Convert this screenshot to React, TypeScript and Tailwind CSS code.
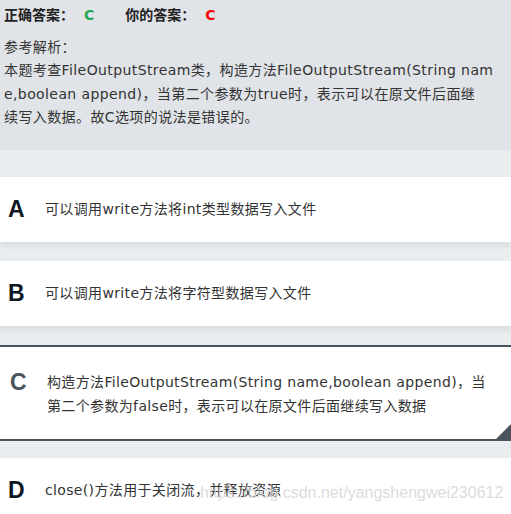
import React from "react";

const font = { fontFamily: '"DejaVu Sans", "Noto Sans CJK SC", sans-serif' } as const;

function Card({ letter, text, selected = false, className = "" }: { letter: string; text: React.ReactNode; selected?: boolean; className?: string }) {
  return (
    <div
      className={`relative bg-white flex ${
        selected
          ? "items-start border-y-2 border-[#4b535b] pt-[23px] pb-[21px]"
          : "items-center h-[65px] shadow-[0_4px_6px_rgba(0,0,0,0.07)]"
      } ${className}`}
    >
      <div
        className={`w-[47px] shrink-0 pl-[8px] text-[23px] font-bold leading-[24px] ${
          selected ? "text-[#4a525a] pl-[10px]" : "text-[#0e1724]"
        }`}
        style={{ fontFamily: '"Liberation Sans", Arial, sans-serif' }}
      >
        {letter}
      </div>
      <div
        className={`leading-[24px] text-[#333] pr-[14px] text-[14px] tracking-[0.35px] ${
          selected ? "" : "-ml-[2px]"
        }`}
      >
        {text}
      </div>
      {selected && (
        <div className="absolute right-0 bottom-0 w-0 h-0 border-l-[15px] border-l-transparent border-b-[15px] border-b-[#4b535b]" />
      )}
    </div>
  );
}

export default function App() {
  return (
    <div className="w-[511px] h-[514px] overflow-hidden bg-[#eaedf0] relative" style={font}>
      <div className="bg-[#e0e3e7] px-[4px] pt-[4px] pb-[20px] text-[14px] text-[#333]">
        <div className="flex items-center h-[22px] leading-[22px] font-bold text-[#222]">
          <span>正确答案：</span>
          <span className="ml-[10px] text-[#1fa84f]">C</span>
          <span className="ml-[31px]">你的答案：</span>
          <span className="ml-[10px] text-[#f00]">C</span>
        </div>
        <div className="mt-[10px] leading-[23.4px] break-all tracking-[0.4px]">
          <div>参考解析：</div>
          <div>
            本题考查FileOutputStream类，构造方法FileOutputStream(String name,boolean append)，当第二个参数为true时，表示可以在原文件后面继
            <br />
            续写入数据。故C选项的说法是错误的。
          </div>
        </div>
      </div>

      <Card className="mt-[27px]" letter="A" text="可以调用write方法将int类型数据写入文件" />
      <Card className="mt-[19px]" letter="B" text="可以调用write方法将字符型数据写入文件" />
      <Card
        className="mt-[19px]"
        letter="C"
        selected
        text="构造方法FileOutputStream(String name,boolean append)，当第二个参数为false时，表示可以在原文件后面继续写入数据"
      />
      <Card className="mt-[17px]" letter="D" text="close()方法用于关闭流，并释放资源" />

      <div
        className="absolute left-[200px] top-[483px] text-[16px] leading-[20px] text-[rgba(210,210,210,0.8)] whitespace-nowrap pointer-events-none"
        style={{ fontFamily: '"Liberation Sans", Arial, sans-serif' }}
      >
        https://blog.csdn.net/yangshengwei230612
      </div>
    </div>
  );
}
